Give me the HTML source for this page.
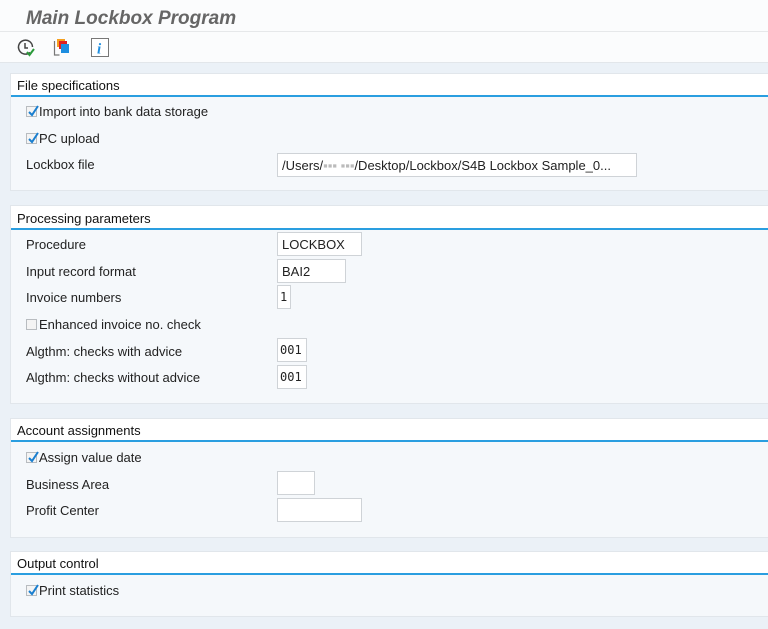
<!DOCTYPE html>
<html><head><meta charset="utf-8"><style>
*{margin:0;padding:0;box-sizing:border-box}
body{width:768px;height:629px;overflow:hidden;background:#ebf1f7;font-family:"Liberation Sans",sans-serif;font-size:13px;color:#222;position:relative}
.top{position:absolute;left:0;top:0;width:768px;height:63px;background:#fbfcfd;border-bottom:1px solid #e2e6ea}
.top .sep{position:absolute;left:0;top:31px;width:768px;height:1px;background:#e6e8ea}
.title{position:absolute;left:26px;top:8px;font-size:19px;font-style:italic;font-weight:bold;color:#666}
.panel{position:absolute;left:10px;width:758px;background:#f5f8fb;border:1px solid #e1e6eb;border-right:none}
.hdr{position:absolute;left:0;top:0;width:100%;background:#fff;border-bottom:2px solid #2a9ee0;padding-left:6px;font-size:13px;color:#111}
.a{position:absolute;white-space:nowrap}
.cb{position:absolute;width:11px;height:11px;border:1px solid #b8bcc0;background:#f4f4f4}
.cb svg{position:absolute;left:0;top:-2px}
.in{position:absolute;height:24px;background:#fff;border:1px solid #cfd3d7;padding:4px 0 0 4px;white-space:nowrap;overflow:hidden}
.m{font-family:"DejaVu Sans Mono","Liberation Mono",monospace;font-size:12px}
</style></head><body>
<div class="top"><div class="title">Main Lockbox Program</div><div class="sep"></div>
<svg style="position:absolute;left:16px;top:38px" width="22" height="20" viewBox="0 0 22 20"><path d="M14 14.5A7 7 0 1 1 16.5 9" fill="none" stroke="#444" stroke-width="1.5"/><path d="M9 5v5h3" fill="none" stroke="#444" stroke-width="1.5"/><path d="M11 14l2.5 3 4.5-6" fill="none" stroke="#2a9a3a" stroke-width="2"/></svg>
<svg style="position:absolute;left:53px;top:38px" width="20" height="20"><path d="M1.5 3v14h5" fill="none" stroke="#777" stroke-width="1.2"/><rect x="4" y="1" width="8" height="8" fill="#f5a020"/><rect x="6" y="3" width="8" height="8" fill="#e02020"/><rect x="8" y="6" width="8" height="9" fill="#1e8ee0"/></svg>
<svg style="position:absolute;left:91px;top:38px" width="20" height="20"><rect x="0.5" y="0.5" width="17" height="18" fill="#fff" stroke="#777"/><text x="6" y="15.5" font-family="Liberation Serif" font-style="italic" font-weight="bold" font-size="15" fill="#1e8ee0">i</text></svg>
</div>

<div class="panel" style="top:73px;height:118px"><div class="hdr" style="height:23px;padding-top:4px">File specifications</div></div>
<div class="panel" style="top:205px;height:199px"><div class="hdr" style="height:24px;padding-top:5px">Processing parameters</div></div>
<div class="panel" style="top:418px;height:120px"><div class="hdr" style="height:23px;padding-top:4px">Account assignments</div></div>
<div class="panel" style="top:551px;height:66px"><div class="hdr" style="height:23px;padding-top:4px">Output control</div></div>

<div class="cb" style="left:26px;top:106px"><svg width="12" height="13"><path d="M2 7l3 3 6-9" fill="none" stroke="#1a7fd0" stroke-width="2"/></svg></div>
<div class="a" style="left:39px;top:104px">Import into bank data storage</div>
<div class="cb" style="left:26px;top:133px"><svg width="12" height="13"><path d="M2 7l3 3 6-9" fill="none" stroke="#1a7fd0" stroke-width="2"/></svg></div>
<div class="a" style="left:39px;top:131px">PC upload</div>
<div class="a" style="left:26px;top:157px">Lockbox file</div>
<div class="in" style="left:277px;top:153px;width:360px">/Users/<span style="color:#bbb">▪▪▪ ▪▪▪</span>/Desktop/Lockbox/S4B Lockbox Sample_0...</div>

<div class="a" style="left:26px;top:237px">Procedure</div>
<div class="in" style="left:277px;top:232px;width:85px">LOCKBOX</div>
<div class="a" style="left:26px;top:264px">Input record format</div>
<div class="in" style="left:277px;top:259px;width:69px">BAI2</div>
<div class="a" style="left:26px;top:290px">Invoice numbers</div>
<div class="in m" style="left:277px;top:285px;width:14px;padding-left:2px">1</div>
<div class="cb" style="left:26px;top:319px"></div>
<div class="a" style="left:39px;top:317px">Enhanced invoice no. check</div>
<div class="a" style="left:26px;top:344px">Algthm: checks with advice</div>
<div class="in m" style="left:277px;top:338px;width:30px;padding-left:2px">001</div>
<div class="a" style="left:26px;top:370px">Algthm: checks without advice</div>
<div class="in m" style="left:277px;top:365px;width:30px;padding-left:2px">001</div>

<div class="cb" style="left:26px;top:452px"><svg width="12" height="13"><path d="M2 7l3 3 6-9" fill="none" stroke="#1a7fd0" stroke-width="2"/></svg></div>
<div class="a" style="left:39px;top:450px">Assign value date</div>
<div class="a" style="left:26px;top:477px">Business Area</div>
<div class="in" style="left:277px;top:471px;width:38px"></div>
<div class="a" style="left:26px;top:503px">Profit Center</div>
<div class="in" style="left:277px;top:498px;width:85px"></div>

<div class="cb" style="left:26px;top:585px"><svg width="12" height="13"><path d="M2 7l3 3 6-9" fill="none" stroke="#1a7fd0" stroke-width="2"/></svg></div>
<div class="a" style="left:39px;top:583px">Print statistics</div>
</body></html>
